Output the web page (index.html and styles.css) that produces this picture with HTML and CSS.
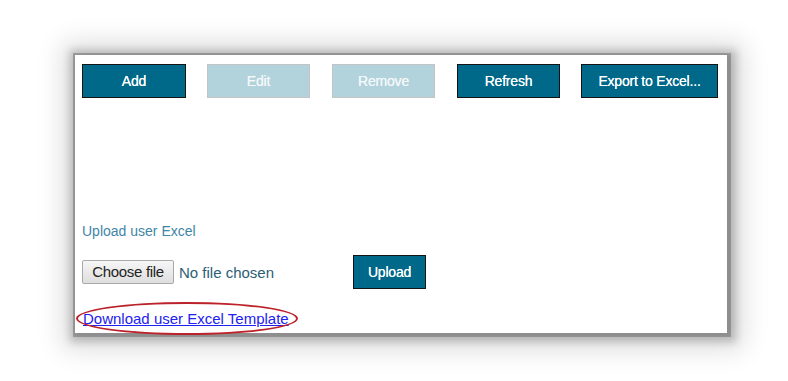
FILE: index.html
```html
<!DOCTYPE html>
<html>
<head>
<meta charset="utf-8">
<link rel="stylesheet" href="styles.css">
</head>
<body>
<div class="panel">
  <div class="toolbar">
    <button class="btn w-add">Add</button>
    <button class="btn disabled w-edit">Edit</button>
    <button class="btn disabled w-remove">Remove</button>
    <button class="btn w-refresh">Refresh</button>
    <button class="btn w-export">Export to Excel...</button>
  </div>
  <div class="upload-label">Upload user Excel</div>
  <div class="upload-row">
    <div class="file">
      <span class="choose">Choose file</span>
      <span class="nofile">No file chosen</span>
    </div>
    <button class="btn w-upload">Upload</button>
  </div>
  <div class="link-row">
    <a href="#" class="dl">Download user Excel Template</a>
    <span class="ring"></span>
  </div>
</div>
</body>
</html>
```
FILE: styles.css
```css
html, body {
  margin: 0;
  padding: 0;
  background: #fff;
}
body {
  box-sizing: border-box;
  height: 381px;
  overflow: hidden;
  padding: 55px 0 0 75px;
  font-family: "Liberation Sans", Arial, sans-serif;
}
.panel {
  width: 652px;
  height: 278px;
  background: #fff;
  box-shadow:
    1px 1px 0 3px rgba(0,0,0,0.22),
    2px 2px 8px 7px rgba(0,0,0,0.2),
    2px 2px 24px 15px rgba(0,0,0,0.13);
  box-sizing: border-box;
  padding: 9px 0 0 7px;
}
.toolbar {
  display: flex;
  height: 34px;
}
.btn {
  height: 34px;
  box-sizing: border-box;
  background: #00698a;
  border: 1px solid #141414;
  color: #fff;
  font-family: "Liberation Sans", Arial, sans-serif;
  font-size: 14px;
  letter-spacing: -0.2px;
  text-shadow: 0 0 0.6px #fff;
  padding: 0;
  cursor: pointer;
}
.btn.disabled {
  background: #b3d3dc;
  border-color: #c4c4c4;
  color: #f4f8fa;
  text-shadow: 0 0 0.6px #f4f8fa;
}
.w-add { width: 104px; }
.w-edit { width: 103px; margin-left: 21px; }
.w-remove { width: 103px; margin-left: 22px; }
.w-refresh { width: 103px; margin-left: 22px; }
.w-export { width: 137px; margin-left: 21px; }
.upload-label {
  margin-top: 125px;
  font-size: 14px;
  color: #3f86a6;
  line-height: 16px;
}
.upload-row {
  display: flex;
  align-items: center;
  margin-top: 16px;
  height: 34px;
}
.file {
  display: flex;
  align-items: center;
  width: 271px;
}
.choose {
  display: inline-block;
  box-sizing: border-box;
  height: 24px;
  width: 92px;
  line-height: 22px;
  text-align: center;
  font-size: 15px;
  letter-spacing: -0.3px;
  color: #222;
  border: 1px solid #a9a9a9;
  border-radius: 2px;
  background: linear-gradient(#f6f6f6, #dedede);
}
.nofile {
  margin-left: 5px;
  font-size: 15px;
  color: #2c5e74;
}
.w-upload { width: 73px; }
.link-row {
  position: relative;
  margin-top: 20px;
  margin-left: 1px;
  height: 20px;
}
.dl {
  font-size: 15px;
  color: #2222ee;
  text-decoration: underline;
  line-height: 20px;
}
.ring {
  position: absolute;
  left: -7px;
  top: -7px;
  width: 222px;
  height: 33px;
  box-sizing: border-box;
  border: 2px solid #bb2229;
  border-radius: 50%;
}
```
